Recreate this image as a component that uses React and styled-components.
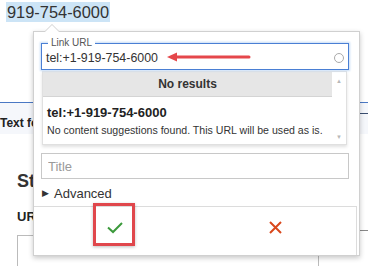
import React from 'react';
import styled, { createGlobalStyle } from 'styled-components';

const GlobalStyle = createGlobalStyle`
  html, body {
    margin: 0;
    padding: 0;
    background: #fff;
  }
  body {
    font-family: "Liberation Sans", Arial, sans-serif;
    color: #333;
    width: 368px;
    height: 266px;
    overflow: hidden;
  }
`;

const Page = styled.div`
  position: relative;
  width: 368px;
  height: 266px;
  overflow: hidden;
`;

const Phone = styled.div`
  padding: 2px 0 0 6px;
  height: 102px;
  box-sizing: border-box;
`;

const Selected = styled.span`
  display: inline-block;
  background: #cce4f6;
  font-size: 16.4px;
  line-height: 20px;
  padding: 0 1px;
  color: #333;
`;

const Band = styled.div`
  position: relative;
  border-top: 1px solid #4a78c4;
  background: #f5f7fb;
  height: 32px;
  padding: 13px 0 0 0;
  box-sizing: border-box;
  font-size: 12px;
  font-weight: bold;
  color: #222;

  &::after {
    content: '';
    position: absolute;
    right: 0;
    top: 10px;
    width: 10px;
    border-top: 1px solid #3a4e70;
  }
`;

const Form = styled.div`
  position: relative;
  padding: 37px 0 0 17px;

  &::after {
    content: '';
    position: absolute;
    right: 0;
    top: 96px;
    width: 10px;
    border-top: 1px solid #888;
  }
`;

const Heading = styled.div`
  font-size: 18px;
  font-weight: bold;
  color: #333;
  line-height: 20px;
`;

const Label = styled.div`
  margin-top: 18px;
  font-size: 13px;
  font-weight: bold;
  color: #222;
  line-height: 16px;
`;

const Box = styled.div`
  margin-top: 10px;
  width: 300px;
  height: 60px;
  border: 1px solid #bbb;
`;

const Popup = styled.div`
  position: absolute;
  left: 33px;
  top: 31px;
  width: 327px;
  height: 225px;
  box-sizing: border-box;
  background: #fff;
  border: 1px solid #d0d0d0;
  box-shadow: 0 2px 5px rgba(0, 0, 0, 0.22);
  display: flex;
  flex-direction: column;

  &::before {
    content: '';
    position: absolute;
    left: 10px;
    top: -8px;
    border: 8px solid transparent;
    border-top: 0;
    border-bottom-color: #d0d0d0;
  }
  &::after {
    content: '';
    position: absolute;
    left: 11px;
    top: -7px;
    border: 7px solid transparent;
    border-top: 0;
    border-bottom-color: #fff;
  }
`;

const Body = styled.div`
  padding: 11px 10px 0 7px;
`;

const UrlField = styled.div`
  position: relative;
  height: 27px;
  box-sizing: border-box;
  border: 1px solid #4a7fd4;
  box-shadow: 0 0 2px 1px #c6dcf6;
  display: flex;
  align-items: center;
  padding: 2px 0 0 4px;
  font-size: 12.4px;
  color: #333;
`;

const Legend = styled.span`
  position: absolute;
  left: 6px;
  top: -6px;
  background: #fff;
  padding: 0 3px;
  font-size: 10px;
  line-height: 10px;
  color: #555;
`;

const Arrow = styled.svg`
  position: absolute;
  left: 125px;
  top: 8px;
`;

const Spinner = styled.span`
  margin-left: auto;
  margin-right: 4px;
  width: 8px;
  height: 8px;
  border: 1.5px solid #aaa;
  border-radius: 50%;
`;

const Dropdown = styled.div`
  margin: 1px 2px 0 1px;
  height: 72px;
  border: 1px solid #e0e0e0;
  box-shadow: 0 2px 3px rgba(0, 0, 0, 0.12);
  display: flex;
`;

const List = styled.div`
  flex: 1;
`;

const Header = styled.div`
  height: 24px;
  background: #e6e6e6;
  border-bottom: 1px solid #d4d4d4;
  display: flex;
  align-items: center;
  justify-content: center;
  font-size: 12px;
  font-weight: bold;
  color: #333;
`;

const Item = styled.div`
  padding: 8px 0 0 4px;
`;

const ItemTitle = styled.div`
  font-size: 13px;
  font-weight: bold;
  color: #222;
  line-height: 16px;
`;

const ItemNote = styled.div`
  margin-top: 3px;
  font-size: 10.6px;
  color: #333;
  line-height: 13px;
  white-space: nowrap;
`;

const Scrollbar = styled.div`
  width: 14px;
  display: flex;
  flex-direction: column;
  justify-content: space-between;
  align-items: center;
  padding: 6px 0 4px;
  font-size: 6px;
  color: #b8b8b8;
`;

const TitleInput = styled.input`
  display: block;
  margin-top: 8px;
  width: 100%;
  height: 26px;
  box-sizing: border-box;
  border: 1px solid #c8c8c8;
  padding: 0 6px;
  font-family: "Liberation Sans", Arial, sans-serif;
  font-size: 13px;
  color: #333;
  outline: none;

  &::placeholder {
    color: #9a9a9a;
  }
`;

const Advanced = styled.div`
  display: flex;
  align-items: center;
  gap: 5px;
  margin-top: 6px;
  padding-left: 1px;
  font-size: 13px;
  color: #333;
  height: 16px;
`;

const Caret = styled.span`
  font-size: 9px;
  color: #333;
`;

const Actions = styled.div`
  margin-top: auto;
  margin-right: 2px;
  height: 48px;
  border-top: 1px solid #dcdcdc;
  display: flex;
`;

const ActionButton = styled.button`
  position: relative;
  flex: 1;
  background: #fff;
  border: 0;
  border-right: ${(p) => (p.$edge ? '1px solid #dcdcdc' : '0')};
  padding: 0 0 8px;
  display: flex;
  align-items: center;
  justify-content: center;
  cursor: pointer;
`;

const Highlight = styled.span`
  position: absolute;
  left: 59px;
  top: -4px;
  width: 42px;
  height: 43px;
  box-sizing: border-box;
  border: 3px solid #e0474c;
  box-shadow: 0 1px 3px rgba(0, 0, 0, 0.25);
`;

const App = () => {
  return (
    <Page>
      <GlobalStyle />
      <Phone>
        <Selected>919-754-6000</Selected>
      </Phone>
      <Band>Text fo</Band>
      <Form>
        <Heading>St</Heading>
        <Label>UR</Label>
        <Box />
      </Form>

      <Popup>
        <Body>
          <UrlField>
            <Legend>Link URL</Legend>
            tel:+1-919-754-6000
            <Arrow width="84" height="10" viewBox="0 0 84 10">
              <path d="M0 5 L10 0.5 L10 9.5 Z" fill="#e5474b" />
              <path d="M8 5 H82" stroke="#e5474b" strokeWidth="3" strokeLinecap="round" />
            </Arrow>
            <Spinner />
          </UrlField>
          <Dropdown>
            <List>
              <Header>No results</Header>
              <Item>
                <ItemTitle>tel:+1-919-754-6000</ItemTitle>
                <ItemNote>No content suggestions found. This URL will be used as is.</ItemNote>
              </Item>
            </List>
            <Scrollbar>
              <span>▲</span>
              <span>▼</span>
            </Scrollbar>
          </Dropdown>
          <TitleInput placeholder="Title" />
          <Advanced>
            <Caret>▶</Caret>
            Advanced
          </Advanced>
        </Body>
        <Actions>
          <ActionButton>
            <Highlight />
            <svg width="18" height="13" viewBox="0 0 18 13">
              <path d="M2 6.5 L7 11 L16 2" fill="none" stroke="#3c9a3c" strokeWidth="2" />
            </svg>
          </ActionButton>
          <ActionButton $edge>
            <svg width="15" height="15" viewBox="0 0 15 15">
              <path d="M2 2 L13 13 M13 2 L2 13" stroke="#d9481c" strokeWidth="2" />
            </svg>
          </ActionButton>
        </Actions>
      </Popup>
    </Page>
  );
};

export default App;
